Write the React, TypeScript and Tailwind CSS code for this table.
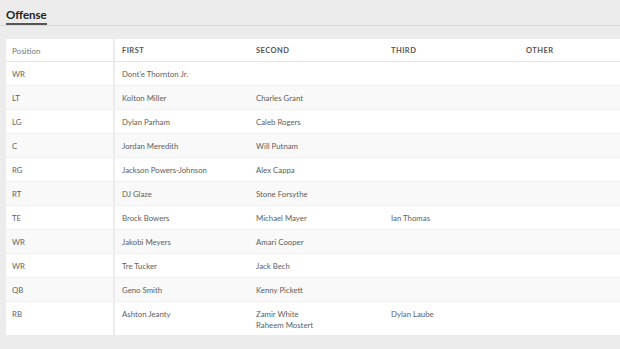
import React from "react";

type Row = { pos: string; first?: string; second?: string[]; third?: string; tall?: boolean };

const rows: Row[] = [
  { pos: "WR", first: "Dont'e Thornton Jr." },
  { pos: "LT", first: "Kolton Miller", second: ["Charles Grant"] },
  { pos: "LG", first: "Dylan Parham", second: ["Caleb Rogers"] },
  { pos: "C", first: "Jordan Meredith", second: ["Will Putnam"] },
  { pos: "RG", first: "Jackson Powers-Johnson", second: ["Alex Cappa"] },
  { pos: "RT", first: "DJ Glaze", second: ["Stone Forsythe"] },
  { pos: "TE", first: "Brock Bowers", second: ["Michael Mayer"], third: "Ian Thomas" },
  { pos: "WR", first: "Jakobi Meyers", second: ["Amari Cooper"] },
  { pos: "WR", first: "Tre Tucker", second: ["Jack Bech"] },
  { pos: "QB", first: "Geno Smith", second: ["Kenny Pickett"] },
  { pos: "RB", first: "Ashton Jeanty", second: ["Zamir White", "Raheem Mostert"], third: "Dylan Laube", tall: true },
];

export default function App() {
  return (
    <div
      className="w-[620px] h-[349px] overflow-hidden bg-[#ececec] text-[#606060]"
      style={{ fontFamily: "Lato, 'Noto Sans', sans-serif" }}
    >
      <div className="flex pt-[8px] border-b border-[#d9d9d9]">
        <div className="ml-[6px] border-b-2 border-[#555] pb-[1px] text-[11.5px] leading-[14px] font-bold text-[#222]">
          Offense
        </div>
      </div>
      <div className="mt-[13px] ml-[6px] w-[700px]">
        <div className="flex h-[23px] border-b border-[#e6e6e6]">
          <div className="w-[107px] bg-white flex items-center pl-[6px] pt-[2px] text-[8px] text-[#777]">Position</div>
          <div className="w-[2px] bg-[#ececec]" />
          <div className="flex-1 bg-white flex items-center pl-[7px] pt-[2px] text-[7.5px] font-bold tracking-[0.06em] text-[#555]">
            <div className="w-[134px]">FIRST</div>
            <div className="w-[135px]">SECOND</div>
            <div className="w-[135px]">THIRD</div>
            <div className="w-[135px]">OTHER</div>
          </div>
        </div>
        {rows.map((r, i) => {
          const bg = i % 2 === 1 ? "bg-[#f9f9f9]" : "bg-white";
          const isLast = i === rows.length - 1;
          return (
            <div
              key={i}
              className={`flex text-[7.8px] leading-[11px] ${r.tall ? "h-[33px] items-start pt-[7px]" : "h-[24px] items-center pt-[2px]"} ${isLast ? "" : "border-b border-[#efefef]"} ${bg}`}
            >
              <div className="w-[107px] pl-[6px]">{r.pos}</div>
              <div className={`w-[2px] bg-[#ececec] self-stretch ${r.tall ? "-mt-[7px]" : "-mt-[2px]"}`} />
              <div className="flex-1 flex pl-[7px]">
                <div className="w-[134px]">{r.first}</div>
                <div className="w-[135px]">
                  {r.second?.map((s, j) => (
                    <div key={j}>{s}</div>
                  ))}
                </div>
                <div className="w-[135px]">{r.third}</div>
                <div className="w-[135px]" />
              </div>
            </div>
          );
        })}
      </div>
    </div>
  );
}
